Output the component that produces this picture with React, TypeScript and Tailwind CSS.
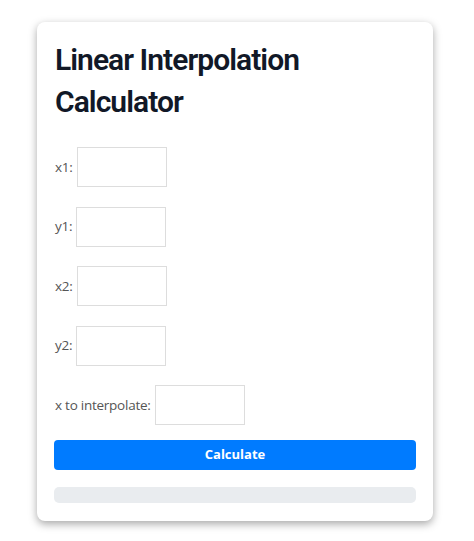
import React from "react";

const fields = ["x1", "y1", "x2", "y2"];

export default function App() {
  return (
    <div className="min-h-[541px] bg-white" style={{ fontFamily: '"Open Sans", "Noto Sans", sans-serif' }}>
      <div className="pt-[22px] pl-[37px]">
        <div className="w-[396px] rounded-lg bg-white px-[17px] pt-[17px] pb-[18px] shadow-[0_3px_8px_rgba(0,0,0,0.35)]">
          <h1
            className="m-0 pl-[1px] text-[30px] font-semibold leading-[42px] tracking-[-0.95px] text-[#111827]"
            style={{ fontFamily: 'Roboto, "Liberation Sans", sans-serif' }}
          >
            Linear Interpolation
            <br />
            Calculator
          </h1>
          <div className="mt-[24px] flex flex-col gap-[19.5px]">
            {fields.map((f) => (
              <div key={f} className="flex items-center gap-[4px] pl-[1px]">
                <label className="text-[13.5px] tracking-[-0.25px] text-[#555]">{f}:</label>
                <input className="h-[40px] w-[90px] border border-[#ddd] bg-white outline-none" />
              </div>
            ))}
            <div className="flex items-center gap-[4px] pl-[1px]">
              <label className="text-[13.5px] tracking-[-0.25px] text-[#555]">x to interpolate:</label>
              <input className="h-[40px] w-[90px] border border-[#ddd] bg-white outline-none" />
            </div>
          </div>
          <button className="mt-[15px] h-[30px] w-full rounded-[4px] bg-[#007bff] text-[13px] font-bold text-white">
            Calculate
          </button>
          <div className="mt-[17px] h-[16px] w-full rounded-[5px] bg-[#e9ecef]" />
        </div>
      </div>
    </div>
  );
}
